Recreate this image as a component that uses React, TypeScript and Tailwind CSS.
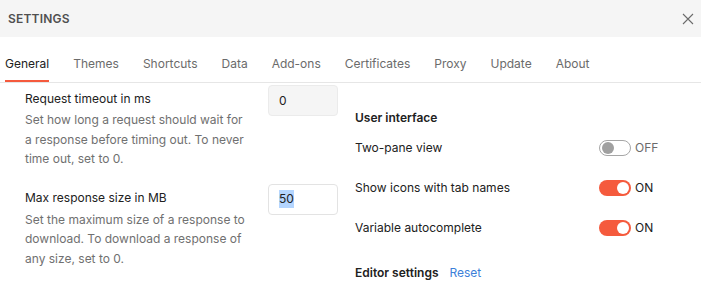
import React from 'react';

const tabs = ['General', 'Themes', 'Shortcuts', 'Data', 'Add-ons', 'Certificates', 'Proxy', 'Update', 'About'];

const Toggle: React.FC<{ on: boolean }> = ({ on }) => (
  <div className="flex items-center gap-[4px]">
    {on ? (
      <div className="w-[32px] h-[16px] rounded-full bg-[#f55a3d] flex items-center justify-end pr-[2px]">
        <div className="w-[12px] h-[12px] rounded-full bg-white" />
      </div>
    ) : (
      <div className="w-[32px] h-[16px] rounded-full border border-[#a6a6a6] bg-white flex items-center pl-[2px]">
        <div className="w-[12px] h-[12px] rounded-full bg-[#a0a0a0]" />
      </div>
    )}
    <span className={`text-[12px] leading-[16px] ${on ? 'text-[#212121]' : 'text-[#6b6b6b]'}`}>{on ? 'ON' : 'OFF'}</span>
  </div>
);

const App: React.FC = () => {
  const uiRows = [
    { label: 'Two-pane view', on: false },
    { label: 'Show icons with tab names', on: true },
    { label: 'Variable autocomplete', on: true },
  ];

  return (
    <div className="w-[701px] h-[287px] overflow-hidden bg-white" style={{ fontFamily: 'Inter, "Noto Sans", sans-serif' }}>
      {/* header */}
      <div className="h-[37px] bg-[#f5f5f5] flex items-center justify-between pl-[8px] pr-[7px]">
        <span className="text-[12px] font-semibold text-[#505050] tracking-[0.2px]">SETTINGS</span>
        <svg width="12" height="12" viewBox="0 0 12 12" fill="none" stroke="#6b6b6b" strokeWidth="1.1">
          <path d="M1 1L11 11M11 1L1 11" />
        </svg>
      </div>

      {/* tabs */}
      <div className="flex gap-[24px] pl-[5px] border-b border-[#e6e6e6]">
        {tabs.map((t, i) => (
          <div
            key={t}
            className={`h-[45px] pt-[18px] text-[12px] leading-[18px] border-b-2 ${
              i === 0 ? 'border-[#f55a3d] text-[#212121]' : 'border-transparent text-[#6b6b6b]'
            }`}
          >
            {t}
          </div>
        ))}
      </div>

      <div className="flex">
        {/* left column */}
        <div className="w-[355px] pl-[25px] pr-[17px] pt-[2px]">
          <div className="flex justify-between">
            <div className="w-[224px] pt-[4px]">
              <div className="text-[12px] leading-[20px] text-[#212121]">Request timeout in ms</div>
              <div className="mt-[1px] text-[12px] leading-[19.5px] text-[#707070]">
                Set how long a request should wait for a response before timing out. To never time out, set to 0.
              </div>
            </div>
            <div className="w-[70px] h-[31px] rounded-[4px] bg-[#f5f5f5] border border-[#ebebeb] flex items-center pl-[10px] text-[12px] text-[#212121]">
              0
            </div>
          </div>
          <div className="flex justify-between mt-[15px]">
            <div className="w-[224px] pt-[4px]">
              <div className="text-[12px] leading-[20px] text-[#212121]">Max response size in MB</div>
              <div className="mt-[2px] text-[12px] leading-[19.5px] text-[#707070]">
                Set the maximum size of a response to download. To download a response of any size, set to 0.
              </div>
            </div>
            <div className="w-[70px] h-[31px] rounded-[4px] bg-white border border-[#e3e3e3] flex items-center pl-[10px] text-[12px] text-[#212121]">
              <span className="bg-[#b4d5fe]">50</span>
            </div>
          </div>
        </div>

        {/* right column */}
        <div className="flex-1 pt-[25px]">
          <div className="text-[12px] leading-[20px] font-semibold text-[#212121]">User interface</div>
          {uiRows.map((r) => (
            <div key={r.label} className="h-[40px] flex items-center">
              <span className="w-[244px] text-[12px] text-[#212121]">{r.label}</span>
              <Toggle on={r.on} />
            </div>
          ))}
          <div className="mt-[15px] flex items-center gap-[11px] leading-[20px]">
            <span className="text-[12px] font-semibold text-[#212121]">Editor settings</span>
            <span className="text-[12px] text-[#3d7fd9]">Reset</span>
          </div>
        </div>
      </div>
    </div>
  );
};

export default App;
